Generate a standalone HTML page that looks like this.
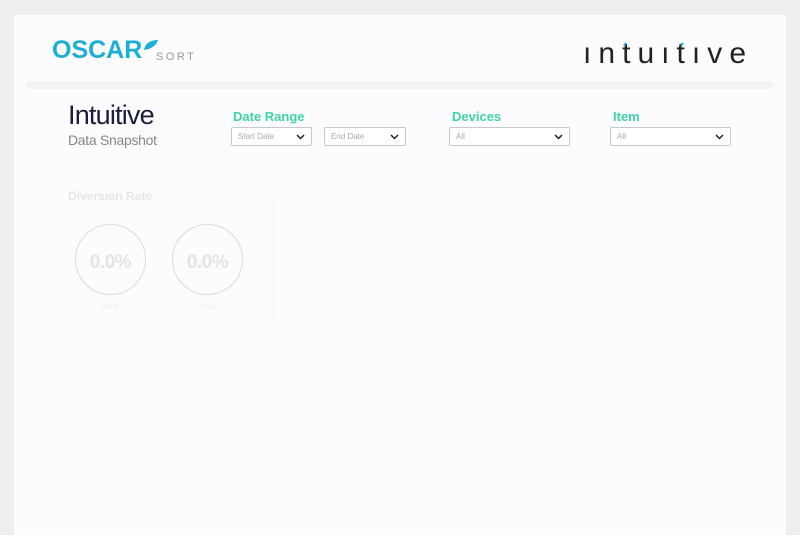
<!DOCTYPE html>
<html><head><style>
body{margin:0;width:800px;height:524px;background:#eeedef;font-family:"Liberation Sans",sans-serif;position:relative;overflow:hidden}
.card{position:absolute;left:14px;top:15px;width:772px;height:520px;background:#fcfbfd}
.a{position:absolute}
.lbl{color:#3fd3a8;font-weight:bold;font-size:13px}
.sel{position:absolute;border:1px solid #c8c8c8;border-radius:2px;background:#fff;font-size:8px;color:#aaa;line-height:17px;padding-left:6px;box-sizing:border-box;height:19px}
.sel svg{position:absolute;right:6px;top:6px}
.circ{position:absolute;width:69px;height:69px;border:1.5px solid #dcdcdc;border-radius:50%;text-align:center;line-height:75px;font-weight:bold;font-size:19px;color:#e4e4e4;letter-spacing:-0.5px}
</style></head><body>
<div class="card"></div>
<div class="a" style="left:52px;top:36px;font-size:25px;font-weight:bold;color:#1bb0d3;letter-spacing:0px">OSCAR</div>
<svg class="a" style="left:143px;top:39px" width="16" height="12"><path d="M1 11 C2 4 8 1 15 1 C13 7 8 10 1 11Z" fill="#1bb0d3"/></svg>
<div class="a" style="left:156px;top:51px;font-size:11px;color:#999;letter-spacing:2.5px">SORT</div>
<svg class="a" style="left:580px;top:30px" width="170" height="40"><text x="3" y="33" font-family="Liberation Sans" font-size="30" fill="#222" textLength="163" lengthAdjust="spacing">ıntuıtıve</text><path d="M44 16l2-3M101 16l2-3" stroke="#1bb0d3" stroke-width="2"/></svg>
<div class="a" style="left:26px;top:81px;width:747px;height:8px;background:#f3f2f4;border-radius:4px"></div>
<div class="a" style="left:68px;top:100px;font-size:27px;color:#1a1f3c;letter-spacing:-0.8px">Intuitive</div>
<div class="a" style="left:68px;top:132px;font-size:14px;color:#888;letter-spacing:-0.3px">Data Snapshot</div>
<div class="a lbl" style="left:233px;top:109px">Date Range</div>
<div class="a lbl" style="left:452px;top:109px">Devices</div>
<div class="a lbl" style="left:613px;top:109px">Item</div>
<div class="sel" style="left:231px;top:127px;width:81px">Start Date<svg width="9" height="6"><path d="M1 1L4.5 4.5L8 1" stroke="#222" stroke-width="1.5" fill="none"/></svg></div>
<div class="sel" style="left:324px;top:127px;width:82px">End Date<svg width="9" height="6"><path d="M1 1L4.5 4.5L8 1" stroke="#222" stroke-width="1.5" fill="none"/></svg></div>
<div class="sel" style="left:449px;top:127px;width:121px">All<svg width="9" height="6"><path d="M1 1L4.5 4.5L8 1" stroke="#222" stroke-width="1.5" fill="none"/></svg></div>
<div class="sel" style="left:610px;top:127px;width:121px">All<svg width="9" height="6"><path d="M1 1L4.5 4.5L8 1" stroke="#222" stroke-width="1.5" fill="none"/></svg></div>
<div class="a" style="left:68px;top:189px;font-size:12px;font-weight:bold;color:#e6e6e6">Diversion Rate</div>
<div class="a" style="left:273px;top:196px;width:1px;height:125px;background:#f5f5f5"></div>
<div class="circ" style="left:75px;top:224px">0.0%</div>
<div class="circ" style="left:172px;top:224px">0.0%</div>
<div class="a" style="left:101px;top:302px;font-size:8px;color:#f0f0f0">Ideal</div>
<div class="a" style="left:199px;top:302px;font-size:8px;color:#f0f0f0">True</div>
</body></html>
